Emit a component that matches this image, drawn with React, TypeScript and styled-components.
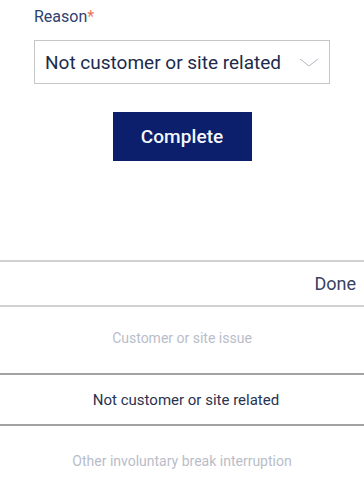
import React from "react";
import styled, { createGlobalStyle } from "styled-components";

const GlobalStyle = createGlobalStyle`
  html, body {
    margin: 0;
    padding: 0;
    background: #fff;
    font-family: Roboto, "Liberation Sans", Arial, sans-serif;
  }
`;

const Page = styled.div`
  width: 364px;
  height: 481px;
  overflow: hidden;
  background: #fff;
  display: flex;
  flex-direction: column;
`;

const Form = styled.div`
  padding: 7px 34px 0 34px;
  display: flex;
  flex-direction: column;
`;

const Label = styled.label`
  font-size: 16px;
  line-height: 20px;
  color: #2e4170;
  margin-bottom: 13px;
`;

const Required = styled.span`
  color: #e9765c;
`;

const Select = styled.div`
  box-sizing: border-box;
  width: 296px;
  height: 44px;
  border: 1px solid #c6c6c6;
  display: flex;
  align-items: center;
  justify-content: space-between;
  padding: 0 10px 0 10px;
  font-size: 19px;
  color: #1c2a4c;
`;

const Chevron = styled.svg`
  width: 20px;
  height: 9px;
`;

const CompleteButton = styled.button`
  align-self: center;
  margin: 28px 0 0 0;
  width: 139px;
  height: 49px;
  border: none;
  background: #0b1f6c;
  color: #f4f6fb;
  font-family: Roboto, "Liberation Sans", Arial, sans-serif;
  font-size: 19px;
  font-weight: 500;
  letter-spacing: 0.1px;
`;

const Picker = styled.div`
  margin-top: 99px;
  display: flex;
  flex-direction: column;
`;

const Toolbar = styled.div`
  box-sizing: border-box;
  height: 47px;
  border-top: 2px solid #d2d2d2;
  border-bottom: 2px solid #d2d2d2;
  display: flex;
  align-items: center;
  justify-content: flex-end;
  padding-right: 8px;
`;

const DoneButton = styled.span`
  font-size: 18px;
  color: #394062;
`;

const Row = styled.div<{ selected?: boolean }>`
  box-sizing: border-box;
  height: ${({ selected }) => (selected ? "53px" : "62px")};
  margin: ${({ selected }) => (selected ? "4px 0" : "0")};
  padding-left: ${({ selected }) => (selected ? "8px" : "0")};
  border-top: ${({ selected }) => (selected ? "2px solid #a2a2a2" : "none")};
  border-bottom: ${({ selected }) => (selected ? "2px solid #a2a2a2" : "none")};
  display: flex;
  align-items: center;
  justify-content: center;
  font-size: ${({ selected }) => (selected ? "15px" : "14px")};
  color: ${({ selected }) => (selected ? "#2a3250" : "#b9bdc9")};
`;

const options = [
  "Customer or site issue",
  "Not customer or site related",
  "Other involuntary break interruption",
];

export default function App() {
  const selected = 1;
  return (
    <Page>
      <GlobalStyle />
      <Form>
        <Label>
          Reason<Required>*</Required>
        </Label>
        <Select>
          <span>Not customer or site related</span>
          <Chevron viewBox="0 0 20 9" fill="none">
            <path d="M1 1 L10 8 L19 1" stroke="#b3b7c1" strokeWidth="1" />
          </Chevron>
        </Select>
        <CompleteButton>Complete</CompleteButton>
      </Form>
      <Picker>
        <Toolbar>
          <DoneButton>Done</DoneButton>
        </Toolbar>
        {options.map((o, i) => (
          <Row key={o} selected={i === selected}>
            {o}
          </Row>
        ))}
      </Picker>
    </Page>
  );
}
